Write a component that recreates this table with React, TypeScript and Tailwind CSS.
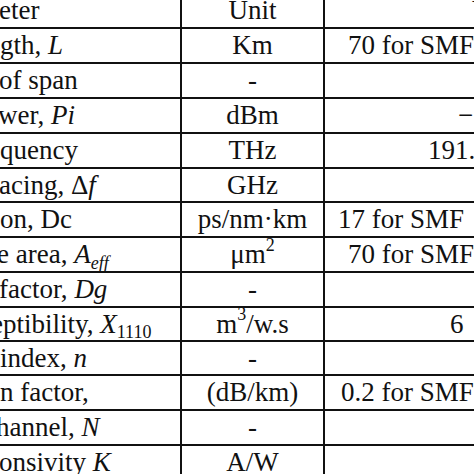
import React from 'react';

type Row = {
  h: string;
  param: React.ReactNode;
  pml: string;
  unit: React.ReactNode;
  value: React.ReactNode;
  vpl: string;
};

const rows: Row[] = [
  { h: 'h-[36px]', param: 'eter', pml: 'ml-[-1px]', unit: 'Unit', value: 'V', vpl: 'pl-[147px]' },
  { h: 'h-[35px]', param: <>gth, <i>L</i></>, pml: 'ml-0', unit: 'Km', value: '70 for SMF', vpl: 'pl-[23px]' },
  { h: 'h-[35px]', param: 'of span', pml: 'ml-[-1px]', unit: '-', value: '', vpl: 'pl-0' },
  { h: 'h-[35px]', param: <>wer, <i>Pi</i></>, pml: 'ml-[-2px]', unit: 'dBm', value: '−', vpl: 'pl-[133px]' },
  { h: 'h-[35px]', param: 'quency', pml: 'ml-0', unit: 'THz', value: '191.', vpl: 'pl-[103px]' },
  { h: 'h-[34px]', param: <>acing, Δ<i>f</i></>, pml: 'ml-[-1px]', unit: 'GHz', value: '', vpl: 'pl-0' },
  { h: 'h-[35px]', param: 'on, Dc', pml: 'ml-0', unit: 'ps/nm·km', value: '17 for SMF', vpl: 'pl-[13px]' },
  {
    h: 'h-[35px]',
    param: <>e area, <i>A</i><span className="relative top-[6px] text-[18px] italic">eff</span></>,
    pml: 'ml-[-3px]',
    unit: <>μm<span className="relative top-[-10px] text-[18px]">2</span></>,
    value: '70 for SMF',
    vpl: 'pl-[23px]',
  },
  { h: 'h-[35px]', param: <>factor, <i>Dg</i></>, pml: 'ml-[-1px]', unit: '-', value: '', vpl: 'pl-0' },
  {
    h: 'h-[34px]',
    param: <>eptibility, <i>X</i><span className="relative top-[5px] text-[18px]">1110</span></>,
    pml: 'ml-[-9px]',
    unit: <>m<span className="relative top-[-10px] text-[18px]">3</span>/w.s</>,
    value: '6',
    vpl: 'pl-[125px]',
  },
  { h: 'h-[34px]', param: <>index, <i>n</i></>, pml: 'ml-0', unit: '-', value: '', vpl: 'pl-0' },
  { h: 'h-[35px]', param: 'n factor,', pml: 'ml-0', unit: '(dB/km)', value: '0.2 for SMF', vpl: 'pl-[16px]' },
  { h: 'h-[35px]', param: <>hannel, <i>N</i></>, pml: 'ml-[-4px]', unit: '-', value: '', vpl: 'pl-0' },
  { h: 'h-[35px]', param: <>onsivity <i>K</i></>, pml: 'ml-[-1px]', unit: 'A/W', value: '', vpl: 'pl-0' },
];

const App: React.FC = () => {
  return (
    <div className="w-[474px] h-[474px] overflow-hidden bg-white text-[#111] text-[27px] leading-none font-['Liberation_Serif',serif]">
      <div className="mt-[-7px] flex flex-col">
        {rows.map((r, i) => (
          <div key={i} className={`flex shrink-0 border-b-2 border-[#111] ${r.h}`}>
            <div className="w-[182px] shrink-0 border-r-2 border-[#111] flex items-center overflow-hidden whitespace-nowrap">
              <span className={r.pml}>{r.param}</span>
            </div>
            <div className="w-[143px] shrink-0 border-r-2 border-[#111] flex items-center justify-center whitespace-nowrap">
              {r.unit}
            </div>
            <div className={`flex-1 flex items-center whitespace-nowrap overflow-hidden ${r.vpl}`}>
              {r.value}
            </div>
          </div>
        ))}
      </div>
    </div>
  );
};

export default App;
